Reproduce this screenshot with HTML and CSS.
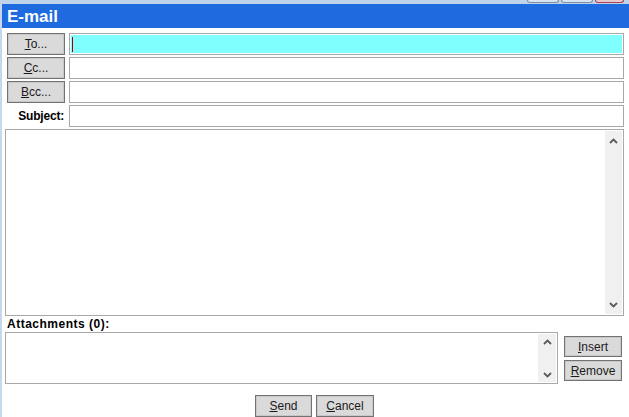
FILE: index.html
```html
<!DOCTYPE html>
<html lang="en">
<head>
  <meta charset="UTF-8">
  <title>E-mail</title>
  <link rel="stylesheet" href="styles.css">
</head>
<body>

  <div class="window">
    <!-- window frame top with caption buttons -->
    <div class="frame-top">
      <span class="ctrl"></span>
      <span class="ctrl"></span>
      <span class="ctrl close"></span>
    </div>

    <div class="title-bar">E-mail</div>

    <div class="content">
      <div class="fields">
        <button class="btn"><u>T</u>o...</button>
        <div class="field active"><span class="caret"></span></div>

        <button class="btn"><u>C</u>c...</button>
        <div class="field"></div>

        <button class="btn"><u>B</u>cc...</button>
        <div class="field"></div>

        <label class="field-label">Subject:</label>
        <div class="field"></div>
      </div>

      <div class="box message">
        <div class="box-body"></div>
        <div class="scrollbar">
          <svg class="arrow" width="9" height="6" viewBox="0 0 9 6"><polyline points="1,5 4.5,1.5 8,5"/></svg>
          <svg class="arrow" width="9" height="6" viewBox="0 0 9 6"><polyline points="1,1 4.5,4.5 8,1"/></svg>
        </div>
      </div>

      <div class="section-label">Attachments (0):</div>

      <div class="attach-row">
        <div class="box attachments">
          <div class="box-body"></div>
          <div class="scrollbar">
            <svg class="arrow" width="9" height="6" viewBox="0 0 9 6"><polyline points="1,5 4.5,1.5 8,5"/></svg>
            <svg class="arrow" width="9" height="6" viewBox="0 0 9 6"><polyline points="1,1 4.5,4.5 8,1"/></svg>
          </div>
        </div>
        <div class="attach-actions">
          <button class="btn"><u>I</u>nsert</button>
          <button class="btn"><u>R</u>emove</button>
        </div>
      </div>

      <div class="footer">
        <button class="btn"><u>S</u>end</button>
        <button class="btn"><u>C</u>ancel</button>
      </div>
    </div>
  </div>

</body>
</html>
```

FILE: styles.css
```css
* {
  box-sizing: border-box;
  margin: 0;
  padding: 0;
}

html, body {
  width: 629px;
  height: 417px;
  overflow: hidden;
  background: #fff;
}

body {
  font-family: 'Liberation Sans', Arial, sans-serif;
  font-size: 12px;
  color: #000;
}

.window {
  height: 417px;
  border-left: 2px solid #c6d8ed;
  display: flex;
  flex-direction: column;
}

/* caption strip */
.frame-top {
  height: 5px;
  margin-left: -2px;
  background: #bfd3ea;
  display: flex;
  justify-content: flex-end;
  align-items: flex-start;
  gap: 2px;
  padding-right: 5px;
}

.ctrl {
  width: 32px;
  height: 3px;
  border: 1px solid #7f8ea3;
  border-top: none;
  border-radius: 0 0 3px 3px;
  background: #d9e4f1;
}

.ctrl.close {
  width: 29px;
  border-color: #b0404e;
  background: #e6c9cf;
}

.title-bar {
  height: 24px;
  background: #1e6adf;
  color: #fff;
  font-weight: bold;
  font-size: 17px;
  line-height: 25px;
  padding-left: 5px;
}

.content {
  flex: 1;
  padding: 5px 5px 0 3px;
  display: flex;
  flex-direction: column;
}

.btn {
  font-family: inherit;
  font-size: 12px;
  color: #1a1a1a;
  background: #dadada;
  border: 1px solid #737373;
  box-shadow: inset 0 0 0 1px #c8c8c8;
  height: 22px;
  cursor: pointer;
}

.btn u {
  text-underline-offset: 1px;
}

.fields {
  display: grid;
  grid-template-columns: 58px 1fr;
  grid-auto-rows: 22px;
  column-gap: 4px;
  row-gap: 2px;
  margin-left: 2px;
}

.field {
  border: 1px solid #a8a8a8;
  box-shadow: inset 0 0 0 1px #fff;
  background: #fff;
  display: flex;
  align-items: center;
}

.field.active {
  background: #80ffff;
}

.caret {
  width: 1px;
  height: 15px;
  margin-left: 2px;
  background: #a00000;
}

.field-label {
  font-weight: bold;
  text-align: right;
  line-height: 22px;
  padding-right: 1px;
  letter-spacing: -0.2px;
}

.box {
  border: 1px solid #a8a8a8;
  box-shadow: inset 0 0 0 1px #fff;
  display: flex;
  padding: 1px;
}

.box-body {
  flex: 1;
}

.message {
  margin-top: 2px;
  height: 187px;
}

.scrollbar {
  width: 17px;
  background: #f0f0f0;
  display: flex;
  flex-direction: column;
  justify-content: space-between;
  align-items: center;
  padding: 7px 0 6px;
}

.arrow polyline {
  fill: none;
  stroke: #5a5a5a;
  stroke-width: 1.8;
}

.section-label {
  font-weight: bold;
  font-size: 12px;
  letter-spacing: 0.5px;
  height: 16px;
  line-height: 16px;
  padding-left: 2px;
}

.attach-row {
  display: flex;
  gap: 6px;
}

.attachments {
  width: 553px;
  height: 52px;
}

.attachments .scrollbar {
  width: 18px;
  padding: 5px 0 4px;
}

.attach-actions {
  display: flex;
  flex-direction: column;
  gap: 3px;
  padding-top: 4px;
}

.attach-actions .btn {
  width: 58px;
  height: 21px;
}

.footer {
  display: flex;
  justify-content: center;
  gap: 4px;
  margin-top: 11px;
}

.footer .btn {
  width: 57px;
}

.footer .btn + .btn {
  width: 58px;
}
```
